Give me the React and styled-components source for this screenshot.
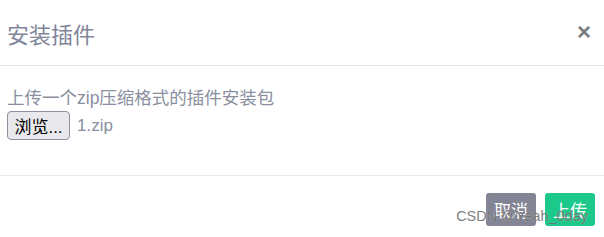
import styled, { createGlobalStyle } from 'styled-components'

const GlobalStyle = createGlobalStyle`
  body {
    margin: 0;
    background: #fff;
    font-family: "Liberation Sans", "Noto Sans CJK SC", sans-serif;
  }
`

const Modal = styled.div`
  position: relative;
  width: 604px;
  height: 237px;
  background: #fff;
  display: flex;
  flex-direction: column;
`

const Header = styled.header`
  height: 65px;
  padding: 0 13px 0 7px;
  display: flex;
  align-items: center;
  justify-content: space-between;
  border-bottom: 1px solid #e6e6ef;
`

const Title = styled.h4`
  margin: 0;
  font-size: 22px;
  font-weight: normal;
  color: #80859a;
`

const Close = styled.button`
  border: 0;
  background: none;
  padding: 0;
  font-size: 24px;
  font-weight: bold;
  color: #7b7b7e;
  line-height: 1;
  cursor: pointer;
  margin-top: -2px;
`

const Body = styled.div`
  padding: 20px 7px 0;
  height: 110px;
  box-sizing: border-box;
  border-bottom: 1px solid #e6e6ef;
`

const Hint = styled.p`
  margin: 0;
  font-size: 17.5px;
  line-height: 25px;
  color: #8a8fa0;
`

const FileRow = styled.div`
  display: flex;
  align-items: center;
  gap: 7px;
`

const Browse = styled.button`
  width: 63px;
  height: 29px;
  padding: 0;
  font-size: 17px;
  font-family: "Liberation Sans", "Noto Sans CJK SC", sans-serif;
  color: #000;
  background: #e9e9ed;
  border: 1px solid #8f8f9d;
  border-radius: 4px;
`

const FileName = styled.span`
  font-size: 17px;
  color: #8a8fa0;
`

const Footer = styled.footer`
  display: flex;
  justify-content: flex-end;
  gap: 9px;
  padding: 17px 9px 0;
`

const Button = styled.button`
  width: 50px;
  height: 33px;
  padding: 0;
  border: 0;
  border-radius: 3px;
  color: #fff;
  font-size: 17px;
  font-family: "Liberation Sans", "Noto Sans CJK SC", sans-serif;
  background: ${props => props.primary ? '#1dc88b' : '#838595'};
`

const Watermark = styled.span`
  position: absolute;
  right: 16px;
  bottom: 13px;
  font-size: 14.5px;
  color: rgba(90, 90, 90, 0.8);
  text-shadow: 0 0 1px rgba(255, 255, 255, 0.6);
  pointer-events: none;
`

export default function App() {
  return (
    <>
      <GlobalStyle />
      <Modal>
        <Header>
          <Title>安装插件</Title>
          <Close>×</Close>
        </Header>
        <Body>
          <Hint>上传一个zip压缩格式的插件安装包</Hint>
          <FileRow>
            <Browse>浏览...</Browse>
            <FileName>1.zip</FileName>
          </FileRow>
        </Body>
        <Footer>
          <Button>取消</Button>
          <Button primary>上传</Button>
        </Footer>
        <Watermark>CSDN @Yeah_0day</Watermark>
      </Modal>
    </>
  )
}
